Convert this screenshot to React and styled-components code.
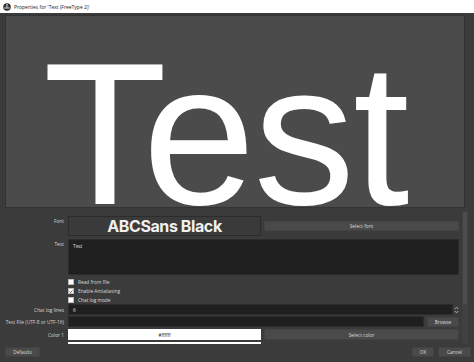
import React from 'react'
import styled, { createGlobalStyle } from 'styled-components'

const Global = createGlobalStyle`
  html, body { margin: 0; padding: 0; background: #3b3b3b; }
  body { font-family: "Open Sans", "Liberation Sans", sans-serif; }
`

const Window = styled.div`
  width: 474px;
  height: 362px;
  display: flex;
  flex-direction: column;
  background: #3b3b3b;
  overflow: hidden;
`

const TitleBar = styled.div`
  height: 13px;
  background: #ffffff;
  display: flex;
  align-items: center;
  gap: 3px;
  padding-left: 3px;
  font-size: 5px;
  color: #222;
  flex: none;
`

const Preview = styled.div`
  margin: 2px 9px 0 5px;
  height: 191px;
  background: #4b4b4b;
  border: 1px solid #333;
  overflow: hidden;
  flex: none;
`

const PreviewText = styled.div`
  font-family: "Liberation Sans", Arial, sans-serif;
  font-size: 203px;
  line-height: 1;
  color: #ffffff;
  margin: 16px 0 0 37px;
  letter-spacing: -2px;
  white-space: nowrap;
`

const Body = styled.div`
  display: flex;
  margin-top: 3px;
  height: 133px;
  flex: none;
`

const Props = styled.div`
  flex: 1;
  display: flex;
  flex-direction: column;
  padding-top: 5px;
  padding-right: 3px;
  overflow: hidden;
`

const Scrollbar = styled.div`
  width: 6px;
  margin-right: 6px;
  background: #404040;
  position: relative;
  flex: none;
  &::after {
    content: '';
    position: absolute;
    left: 1px;
    right: 1px;
    top: 1px;
    height: 92px;
    background: #4d4d4d;
  }
`

const Row = styled.div`
  display: grid;
  grid-template-columns: 64px 1fr;
  column-gap: 4px;
  align-items: ${p => p.$top ? 'start' : 'center'};
  margin-bottom: ${p => p.$gap || 0}px;
`

const Label = styled.div`
  text-align: right;
  font-size: 4.8px;
  line-height: 6px;
  color: #d6d6d6;
  white-space: nowrap;
  padding-top: ${p => p.$pt || 0}px;
`

const Split = styled.div`
  display: flex;
  gap: 3px;
  align-items: center;
`

const FontBox = styled.div`
  width: 193px;
  height: 20px;
  background: #3a3a3a;
  border: 1px solid #2c2c2c;
  box-sizing: border-box;
  display: flex;
  align-items: center;
  justify-content: center;
  font-family: "Inter", "Open Sans", sans-serif;
  font-weight: 700;
  font-size: 16px;
  color: #f0f0f0;
  letter-spacing: -0.4px;
  flex: none;
`

const Button = styled.div`
  height: ${p => p.$h || 10}px;
  width: ${p => p.$w ? p.$w + 'px' : 'auto'};
  flex: ${p => p.$w ? 'none' : 1};
  background: #4a4a4a;
  border: 1px solid #424242;
  box-sizing: border-box;
  display: flex;
  align-items: center;
  justify-content: center;
  font-size: 4.8px;
  color: #dcdcdc;
`

const TextArea = styled.div`
  height: 36px;
  background: #1f1f1f;
  border: 1px solid #2b2b2b;
  box-sizing: border-box;
  padding: 3px 4px;
  font-size: 4.8px;
  color: #e0e0e0;
`

const CheckRow = styled.div`
  display: flex;
  align-items: center;
  gap: 4px;
  padding-left: 68px;
  height: 10px;
  font-size: 4.8px;
  color: #dcdcdc;
`

const Box = styled.div`
  width: 6px;
  height: 6px;
  background: #ffffff;
  border: 1px solid #bbb;
  box-sizing: border-box;
  display: flex;
  align-items: center;
  justify-content: center;
`

const Input = styled.div`
  flex: 1;
  height: 11px;
  background: #1f1f1f;
  border: 1px solid #2b2b2b;
  box-sizing: border-box;
  display: flex;
  align-items: center;
  padding-left: 4px;
  font-size: 4.8px;
  color: #e0e0e0;
`

const SpinBox = styled.div`
  display: flex;
  align-items: center;
`

const Spinner = styled.div`
  width: 6px;
  height: 10px;
  display: flex;
  flex-direction: column;
  justify-content: center;
  align-items: center;
`

const ColorSwatch = styled.div`
  width: 193px;
  height: 11px;
  background: #ffffff;
  box-sizing: border-box;
  display: flex;
  align-items: center;
  justify-content: center;
  font-size: 4.5px;
  color: #222;
  flex: none;
`

const Swatch2 = styled.div`
  width: 193px;
  height: 2px;
  background: #ffffff;
  margin-top: 2px;
`

const Footer = styled.div`
  display: flex;
  align-items: flex-start;
  padding: 3px 3px 0 5px;
  gap: 4px;
  height: 15px;
  box-sizing: border-box;
`

const Spacer = styled.div`
  flex: 1;
`

const ObsIcon = () => (
  <svg width="8" height="8" viewBox="0 0 16 16">
    <circle cx="8" cy="8" r="7.5" fill="#2a2a2a" />
    <circle cx="8" cy="5" r="2.3" fill="#fff" />
    <circle cx="5.3" cy="9.8" r="2.3" fill="#fff" />
    <circle cx="10.7" cy="9.8" r="2.3" fill="#fff" />
    <circle cx="8" cy="5" r="1.4" fill="#2a2a2a" />
    <circle cx="5.3" cy="9.8" r="1.4" fill="#2a2a2a" />
    <circle cx="10.7" cy="9.8" r="1.4" fill="#2a2a2a" />
  </svg>
)

const Check = () => (
  <svg width="5" height="5" viewBox="0 0 10 10">
    <path d="M1.5 5.2 L4 7.8 L8.6 2.2" stroke="#333" strokeWidth="1.8" fill="none" />
  </svg>
)

const Arrow = ({ down }) => (
  <svg width="5" height="4" viewBox="0 0 10 8">
    <path d={down ? 'M1.5 2 L5 5.5 L8.5 2' : 'M1.5 6 L5 2.5 L8.5 6'} stroke="#cfcfcf" strokeWidth="1.6" fill="none" />
  </svg>
)

export default function App() {
  return (
    <>
      <Global />
      <Window>
        <TitleBar>
          <ObsIcon />
          <span>Properties for 'Text (FreeType 2)'</span>
        </TitleBar>
        <Preview>
          <PreviewText>Test</PreviewText>
        </Preview>
        <Body>
          <Props>
            <Row $top $gap={3}>
              <Label $pt={2}>Font</Label>
              <Split>
                <FontBox>ABCSans Black</FontBox>
                <Button>Select font</Button>
              </Split>
            </Row>
            <Row $top $gap={3}>
              <Label $pt={2}>Text</Label>
              <TextArea>Test</TextArea>
            </Row>
            <CheckRow>
              <Box />
              Read from file
            </CheckRow>
            <CheckRow>
              <Box><Check /></Box>
              Enable Antialiasing
            </CheckRow>
            <CheckRow>
              <Box />
              Chat log mode
            </CheckRow>
            <Row $gap={1}>
              <Label>Chat log lines</Label>
              <SpinBox>
                <Input>6</Input>
                <Spinner>
                  <Arrow />
                  <Arrow down />
                </Spinner>
              </SpinBox>
            </Row>
            <Row $gap={2}>
              <Label>Text File (UTF-8 or UTF-16)</Label>
              <Split>
                <Input />
                <Button $w={32}>Browse</Button>
              </Split>
            </Row>
            <Row>
              <Label>Color 1</Label>
              <Split>
                <ColorSwatch>#ffffff</ColorSwatch>
                <Button $h={11}>Select color</Button>
              </Split>
            </Row>
            <Row>
              <div />
              <Swatch2 />
            </Row>
          </Props>
          <Scrollbar />
        </Body>
        <Footer>
          <Button $w={35}>Defaults</Button>
          <Spacer />
          <Button $w={22}>OK</Button>
          <Button $w={33}>Cancel</Button>
        </Footer>
      </Window>
    </>
  )
}
